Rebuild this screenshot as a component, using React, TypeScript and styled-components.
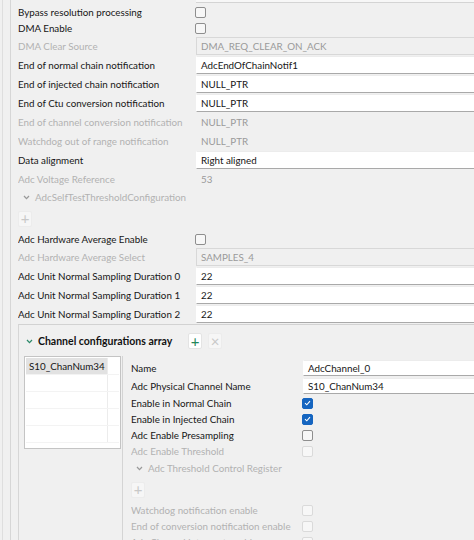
import styled, {createGlobalStyle} from "styled-components";

const GlobalStyle = createGlobalStyle`
  html, body {
    margin: 0;
    padding: 0;
    background: #f0f0f0;
    overflow: hidden;
  }
  body {
    font-family: Lato, "Noto Sans", sans-serif;
    font-size: 9.8px;
    color: #161616;
  }
`

type Field = {
    label: string;
    kind: 'check' | 'edit' | 'readonly' | 'plain';
    value?: string;
    disabled?: boolean;
    checked?: boolean;
}

const mainFields: Field[] = [
    {label: 'Bypass resolution processing', kind: 'check'},
    {label: 'DMA Enable', kind: 'check'},
    {label: 'DMA Clear Source', kind: 'readonly', value: 'DMA_REQ_CLEAR_ON_ACK', disabled: true},
    {label: 'End of normal chain notification', kind: 'edit', value: 'AdcEndOfChainNotif1'},
    {label: 'End of injected chain notification', kind: 'edit', value: 'NULL_PTR'},
    {label: 'End of Ctu conversion notification', kind: 'edit', value: 'NULL_PTR'},
    {label: 'End of channel conversion notification', kind: 'plain', value: 'NULL_PTR', disabled: true},
    {label: 'Watchdog out of range notification', kind: 'plain', value: 'NULL_PTR', disabled: true},
    {label: 'Data alignment', kind: 'edit', value: 'Right aligned'},
    {label: 'Adc Voltage Reference', kind: 'plain', value: '53', disabled: true},
]

const averageFields: Field[] = [
    {label: 'Adc Hardware Average Enable', kind: 'check'},
    {label: 'Adc Hardware Average Select', kind: 'readonly', value: 'SAMPLES_4', disabled: true},
    {label: 'Adc Unit Normal Sampling Duration 0', kind: 'edit', value: '22'},
    {label: 'Adc Unit Normal Sampling Duration 1', kind: 'edit', value: '22'},
    {label: 'Adc Unit Normal Sampling Duration 2', kind: 'edit', value: '22'},
]

const channelFields: Field[] = [
    {label: 'Name', kind: 'edit', value: 'AdcChannel_0'},
    {label: 'Adc Physical Channel Name', kind: 'edit', value: 'S10_ChanNum34'},
    {label: 'Enable in Normal Chain', kind: 'check', checked: true},
    {label: 'Enable in Injected Chain', kind: 'check', checked: true},
    {label: 'Adc Enable Presampling', kind: 'check'},
    {label: 'Adc Enable Threshold', kind: 'check', disabled: true},
]

const channelTail: Field[] = [
    {label: 'Watchdog notification enable', kind: 'check', disabled: true},
    {label: 'End of conversion notification enable', kind: 'check', disabled: true},
    {label: 'Adc Channel Interrupt enable', kind: 'check', disabled: true},
]

const Chevron = () => (
    <svg width="7" height="5" viewBox="0 0 7 5">
        <path d="M1 1 L3.5 3.6 L6 1" fill="none" stroke="currentColor" strokeWidth="1.3"/>
    </svg>
)

const Tick = () => (
    <svg width="7" height="6" viewBox="0 0 7 6">
        <path d="M1 3.2 L2.8 4.8 L6 1.2" fill="none" stroke="#ffffff" strokeWidth="1.1"/>
    </svg>
)

const FieldRows = ({fields, labelWidth, compact}: {fields: Field[], labelWidth: number, compact?: boolean}) => (
    <>
        {fields.map((f) => (
            <Row key={f.label} $height={f.kind === 'check' ? 16 : compact ? 18 : 19}>
                <Label $width={labelWidth} $disabled={f.disabled}>{f.label}</Label>
                <Value>
                    {f.kind === 'check' ? (
                        <CheckBox $checked={f.checked} $disabled={f.disabled}>
                            {f.checked && <Tick/>}
                        </CheckBox>
                    ) : (
                        <TextBox $kind={f.kind} $compact={compact}>{f.value}</TextBox>
                    )}
                </Value>
            </Row>
        ))}
    </>
)

const App = () => {
    return (
        <>
            <GlobalStyle/>
            <Frame>
                <Editor>
                    <TopSliver/>
                    <FieldRows fields={mainFields} labelWidth={178}/>
                    <SectionHeader $disabled>
                        <Chevron/>
                        AdcSelfTestThresholdConfiguration
                    </SectionHeader>
                    <ButtonBar>
                        <IconButton $enabled={false}>+</IconButton>
                    </ButtonBar>
                    <FieldRows fields={averageFields} labelWidth={178}/>
                    <GroupBox>
                        <GroupHeader>
                            <GroupTitle>
                                <Chevron/>
                                Channel configurations array
                            </GroupTitle>
                            <IconButton $enabled>+</IconButton>
                            <IconButton $enabled={false}>×</IconButton>
                        </GroupHeader>
                        <GroupBody>
                            <ListPane>
                                <ListBox>
                                    {[0, 1, 2, 3, 4].map((i) => (
                                        <ListRow key={i} $selected={i === 0}>
                                            <ListCell>{i === 0 ? 'S10_ChanNum34' : ''}</ListCell>
                                            <ListSpare/>
                                        </ListRow>
                                    ))}
                                </ListBox>
                            </ListPane>
                            <DetailPane>
                                <FieldRows fields={channelFields} labelWidth={172} compact/>
                                <SectionHeader $disabled>
                                    <Chevron/>
                                    Adc Threshold Control Register
                                </SectionHeader>
                                <ButtonBar>
                                    <IconButton $enabled={false}>+</IconButton>
                                </ButtonBar>
                                <FieldRows fields={channelTail} labelWidth={172} compact/>
                            </DetailPane>
                        </GroupBody>
                    </GroupBox>
                </Editor>
            </Frame>
        </>
    );
}

const Frame = styled.div`
  margin-left: 2px;
  border-left: 1px solid #dedede;
  padding-left: 7px;
  height: 540px;
  overflow: hidden;
`

const Editor = styled.div`
  border-left: 1px solid #d6d6d6;
  padding-left: 7px;
  height: 100%;
  display: flex;
  flex-direction: column;
`

const TopSliver = styled.div`
  height: 2px;
  margin-left: 178px;
  margin-bottom: 1px;
  border-bottom: 1px solid #d4d4d4;
  background: #f7f7f7;
  flex-shrink: 0;
`

const Row = styled.div<{$height: number}>`
  display: flex;
  align-items: center;
  height: ${({$height}) => $height}px;
  flex-shrink: 0;
`

const Label = styled.div<{$width: number, $disabled?: boolean}>`
  width: ${({$width}) => $width}px;
  flex-shrink: 0;
  white-space: nowrap;
  overflow: hidden;
  color: ${({$disabled}) => $disabled ? '#b2b2b2' : '#161616'};
`

const Value = styled.div`
  flex: 1;
  display: flex;
  align-items: center;
  min-width: 0;
`

const TextBox = styled.div<{$kind: string, $compact?: boolean}>`
  flex: 1;
  height: ${({$compact}) => $compact ? 16 : 18}px;
  line-height: ${({$compact}) => $compact ? 14 : 16}px;
  padding-left: 4px;
  box-sizing: border-box;
  white-space: nowrap;
  background: ${({$kind}) => $kind === 'edit' ? '#ffffff' : 'transparent'};
  color: ${({$kind}) => $kind === 'edit' ? '#161616' : '#9a9a9a'};
  border: 1px solid ${({$kind}) => $kind === 'readonly' ? '#d8d8d8' : 'transparent'};
  border-right: none;
  ${({$kind}) => $kind === 'edit' && `
    border-top-color: #ececec;
    border-bottom-color: #a9a9a9;
  `}
`

const CheckBox = styled.div<{$checked?: boolean, $disabled?: boolean}>`
  width: 11px;
  height: 11px;
  box-sizing: border-box;
  margin-left: -1px;
  border-radius: 2px;
  display: flex;
  align-items: center;
  justify-content: center;
  background: ${({$checked}) => $checked ? '#1565c0' : '#f7f7f7'};
  border: 1px solid ${({$checked, $disabled}) => $checked ? '#1565c0' : $disabled ? '#dadada' : '#8e8e8e'};
`

const SectionHeader = styled.div<{$disabled?: boolean}>`
  display: flex;
  align-items: center;
  gap: 5px;
  height: 18px;
  flex-shrink: 0;
  padding-left: 5px;
  color: ${({$disabled}) => $disabled ? '#b2b2b2' : '#161616'};
  white-space: nowrap;

  svg {
    color: ${({$disabled}) => $disabled ? '#9a9a9a' : '#161616'};
  }
`

const ButtonBar = styled.div`
  display: flex;
  align-items: center;
  height: 25px;
  flex-shrink: 0;
`

const IconButton = styled.div<{$enabled: boolean}>`
  width: 14px;
  height: 16px;
  display: flex;
  align-items: center;
  justify-content: center;
  font-size: 15px;
  line-height: 1;
  box-sizing: border-box;
  color: ${({$enabled}) => $enabled ? '#23875a' : '#c8c8c8'};
  background: ${({$enabled}) => $enabled ? '#ffffff' : '#f6f6f6'};
  border: 1px solid ${({$enabled}) => $enabled ? '#e4e4e4' : '#ececec'};
  border-radius: 2px;
  margin-right: 6px;
`

const GroupBox = styled.div`
  margin-top: 1px;
  border-top: 1px solid #d2d2d2;
  border-left: 1px solid #d6d6d6;
  padding: 8px 0 0 5px;
  flex: 1;
  display: flex;
  flex-direction: column;
`

const GroupHeader = styled.div`
  display: flex;
  align-items: center;
  height: 16px;
`

const GroupTitle = styled.div`
  width: 164px;
  display: flex;
  align-items: center;
  gap: 5px;
  padding-left: 2px;
  box-sizing: border-box;
  font-weight: 700;
  font-size: 10.5px;
  color: #111111;
  white-space: nowrap;

  svg {
    color: #2d8a6a;
  }
`

const GroupBody = styled.div`
  display: flex;
  margin-top: 7px;
  flex: 1;
`

const ListPane = styled.div`
  width: 98px;
  border-right: 1px solid #d4d4d4;
  flex-shrink: 0;
`

const ListBox = styled.div`
  width: 97px;
  height: 93px;
  box-sizing: border-box;
  background: #ffffff;
  border: 1px solid #c4c4c4;
  padding: 1px;
`

const ListRow = styled.div<{$selected: boolean}>`
  display: flex;
  height: 16px;
  border-bottom: 1px solid #f3f3f3;

  & > div:first-child {
    background: ${({$selected}) => $selected ? '#e2e2e2' : 'transparent'};
  }
`

const ListCell = styled.div`
  width: 81px;
  padding-left: 3px;
  box-sizing: border-box;
  line-height: 16px;
  white-space: nowrap;
`

const ListSpare = styled.div`
  flex: 1;
  border-left: 1px solid #ececec;
`

const DetailPane = styled.div`
  flex: 1;
  padding: 3px 0 0 8px;
  display: flex;
  flex-direction: column;
  min-width: 0;
`

export default App;
